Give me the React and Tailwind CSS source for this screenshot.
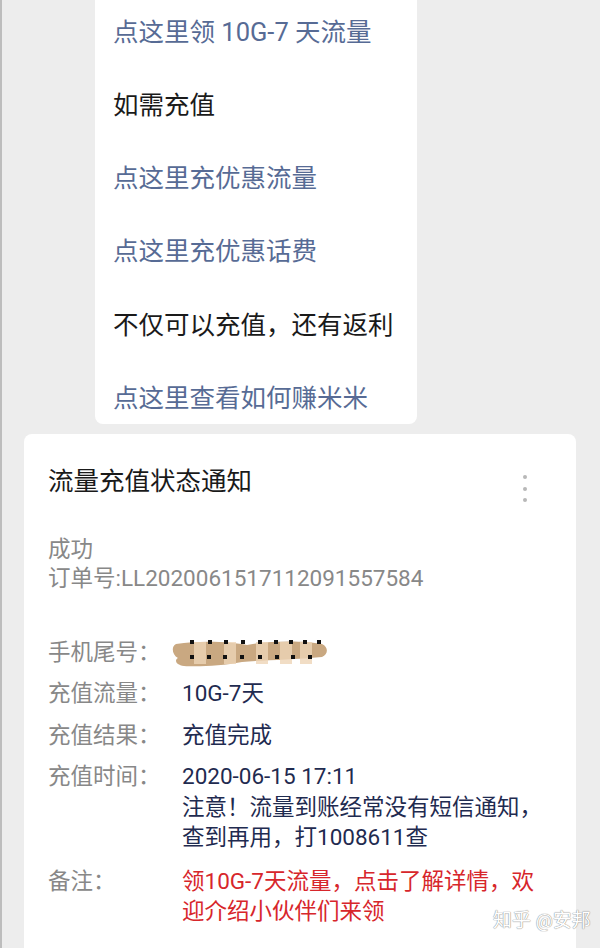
import React from 'react';

const links = [
    { text: '点这里领 10G-7 天流量', link: true },
    { text: '如需充值', link: false },
    { text: '点这里充优惠流量', link: true },
    { text: '点这里充优惠话费', link: true },
    { text: '不仅可以充值，还有返利', link: false },
    { text: '点这里查看如何赚米米', link: true },
];

// mancha que tapa el numero de telefono
const PhoneBlur = () => (
    <svg width="156" height="30" viewBox="0 0 156 30" className="ml-[-10px] mt-[1px]">
        <path d="M4 6 C30 2 60 4 75 7 C95 3 130 2 150 6 C157 9 156 17 150 19 C120 22 90 22 70 24 C50 28 25 29 12 28 C4 27 2 22 6 20 C0 17 -1 8 4 6 Z" fill="#c9a881" />
        {[22, 52, 84, 108, 128].map(x => (
            <rect key={x} x={x} y="4" width="12" height="22" fill="#eed5b7" opacity="0.8" />
        ))}
        {[18, 36, 52, 69, 86, 102, 117, 131, 145].map(x => (
            <rect key={'t' + x} x={x} y="2" width="4" height="4" fill="#111" />
        ))}
        {[18, 35, 51, 68, 86, 103, 119, 136].map(x => (
            <rect key={'b' + x} x={x} y="17" width="4" height="4" fill="#111" />
        ))}
    </svg>
);

const Row = ({ label, className, children }) => (
    <div className={`flex ${className}`}>
        <div className="w-[134px] shrink-0 text-[#888888]">{label}</div>
        <div className="flex-1">{children}</div>
    </div>
);

const App = () => {
    return (
        <div
            className="relative w-[600px] h-[948px] overflow-hidden bg-[#ededed] border-l-2 border-[#bdbdbd]"
            style={{ fontFamily: 'Roboto, "Noto Sans CJK SC", sans-serif' }}
        >
            {/* burbuja de mensajes */}
            <div className="ml-[93px] w-[322px] bg-white rounded-b-lg pt-[16.5px] pb-[11.5px] pl-[18px] flex flex-col gap-[43.3px]">
                {links.map(item => (
                    <p
                        key={item.text}
                        className={`text-[25.5px] leading-[30px] whitespace-nowrap ${item.link ? 'text-[#576b95]' : 'text-[#1a1a1a]'}`}
                    >
                        {item.text}
                    </p>
                ))}
            </div>

            {/* tarjeta de notificacion */}
            <div className="relative mt-[10px] ml-[22px] w-[552px] h-[600px] bg-white rounded-t-lg pl-[24px] pt-[30px]">
                <h1 className="text-[25.5px] leading-[34px] text-[#1a1a1a]">流量充值状态通知</h1>
                <div className="absolute left-[499px] top-[41px] flex flex-col gap-[7.5px]">
                    <span className="block w-[4px] h-[4px] rounded-full bg-[#b8b8b8]"></span>
                    <span className="block w-[4px] h-[4px] rounded-full bg-[#b8b8b8]"></span>
                    <span className="block w-[4px] h-[4px] rounded-full bg-[#b8b8b8]"></span>
                </div>

                <div className="mt-[37px] text-[22.5px] leading-[29px] text-[#888888]">
                    <p>成功</p>
                    <p>订单号:LL2020061517112091557584</p>
                </div>

                <div className="mt-[44px] text-[22.5px] leading-[30px] text-[#1f2b50]">
                    <Row label="手机尾号：">
                        <PhoneBlur />
                    </Row>
                    <Row label="充值流量：" className="mt-[10px]">10G-7天</Row>
                    <Row label="充值结果：" className="mt-[12px]">充值完成</Row>
                    <Row label="充值时间：" className="mt-[11px]">
                        <div className="leading-[30.5px] whitespace-nowrap">
                            2020-06-15 17:11<br />
                            注意！流量到账经常没有短信通知，<br />
                            查到再用，打1008611查
                        </div>
                    </Row>
                    <Row label="备注：" className="mt-[13px]">
                        <div className="text-[#d7262b] whitespace-nowrap">
                            领10G-7天流量，点击了解详情，欢<br />
                            迎介绍小伙伴们来领
                        </div>
                    </Row>
                </div>
            </div>

            {/* marca de agua */}
            <div className="absolute left-[491px] top-[908px] text-[19px] leading-[26px] text-white whitespace-nowrap [text-shadow:0_0_1px_#8a8a8a,0_0_1px_#8a8a8a]">
                知乎 @安邦
            </div>
        </div>
    );
}

export default App;
